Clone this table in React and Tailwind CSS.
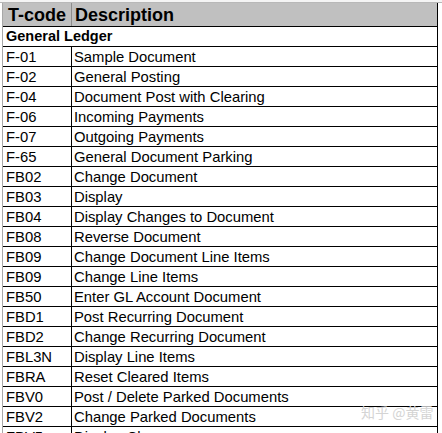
const rows = [
  ["F-01", "Sample Document"],
  ["F-02", "General Posting"],
  ["F-04", "Document Post with Clearing"],
  ["F-06", "Incoming Payments"],
  ["F-07", "Outgoing Payments"],
  ["F-65", "General Document Parking"],
  ["FB02", "Change Document"],
  ["FB03", "Display"],
  ["FB04", "Display Changes to Document"],
  ["FB08", "Reverse Document"],
  ["FB09", "Change Document Line Items"],
  ["FB09", "Change Line Items"],
  ["FB50", "Enter GL Account Document"],
  ["FBD1", "Post Recurring Document"],
  ["FBD2", "Change Recurring Document"],
  ["FBL3N", "Display Line Items"],
  ["FBRA", "Reset Cleared Items"],
  ["FBV0", "Post / Delete Parked Documents"],
  ["FBV2", "Change Parked Documents"],
  ["FBV5", "Display Changes"],
];

export default function App() {
  return (
    <div
      className="relative h-[433px] w-[442px] overflow-hidden bg-white text-black"
      style={{ fontFamily: '"Liberation Sans", Arial, sans-serif' }}
    >
      {/* sheet gridlines above the table */}
      <div className="h-[3px] border-b border-[#b8b8b8] bg-[#f4f4f4]" />

      <div className="ml-[2px] w-[436px] border-l border-[#a8a8a8]">
        {/* header */}
        <div className="flex h-[24px] border-b border-r border-black bg-[#c0c0c0] text-[18px] font-bold leading-[24px]">
          <div className="w-[69px] border-r border-[#8c8c8c] pl-[5px]">T-code</div>
          <div className="flex-1 pl-[3px]">Description</div>
        </div>

        {/* section */}
        <div className="h-[20px] border-b border-r border-black pl-[3px] text-[14.5px] font-bold leading-[19px]">
          General Ledger
        </div>

        {rows.map(([code, desc], i) => (
          <div
            key={i}
            className="flex h-[20px] border-b border-r border-black text-[14.8px] leading-[20px]"
          >
            <div className="w-[69px] border-r border-black pl-[3px]">{code}</div>
            <div className="flex-1 whitespace-nowrap pl-[2px]">{desc}</div>
          </div>
        ))}
      </div>

      {/* watermark */}
      <div
        className="absolute left-[361px] top-[403px] whitespace-nowrap text-[14px] leading-[18px] text-[#d4d4d4]"
        style={{ fontFamily: '"Noto Sans CJK SC", sans-serif' }}
      >
        知乎 @黄雷
      </div>
    </div>
  );
}
